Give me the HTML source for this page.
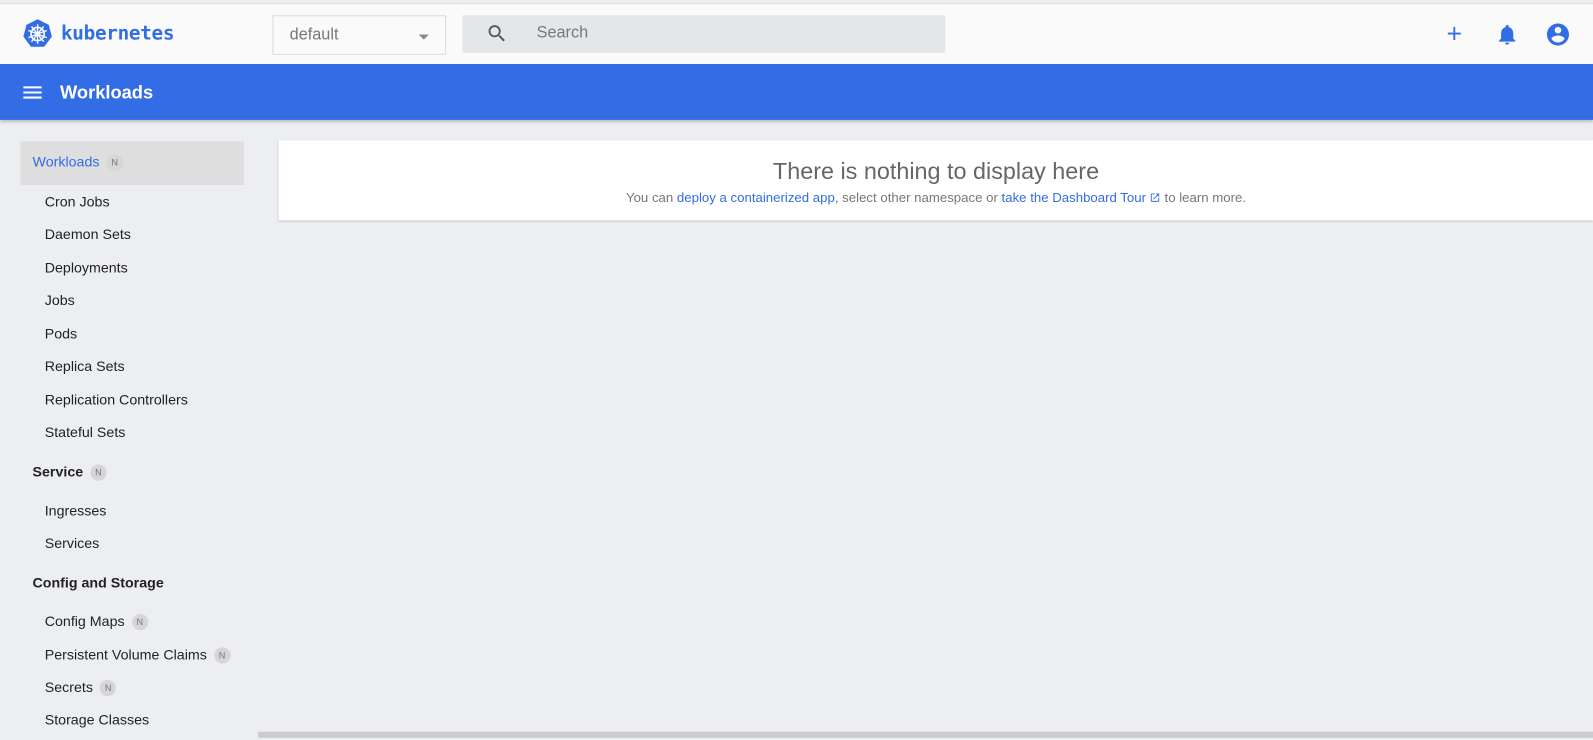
<!DOCTYPE html>
<html><head><meta charset="utf-8"><style>
*{margin:0;padding:0;box-sizing:border-box}
body{width:1593px;height:739px;overflow:hidden;background:#eceef1;font-family:"Liberation Sans",Roboto,sans-serif;position:relative}
#w{position:absolute;left:0;top:0;width:1568px;height:728px;transform:scale(1.0163);transform-origin:0 0}
.top{position:absolute;left:0;top:3px;width:1568px;height:60px;background:#fafafa;border-top:1px solid #ddd}
.logo{position:absolute;left:22px;top:14px}
.logotxt{position:absolute;left:60px;top:18px;font-family:"DejaVu Sans Mono","Liberation Mono",monospace;font-weight:bold;font-size:19px;color:#326de6;letter-spacing:-0.3px}
.ns{position:absolute;left:268px;top:11px;width:171px;height:39px;border:1px solid #dcdcdc;background:#fafafa;color:#777;font-size:16px;padding:10px 16px}
.ns:after{content:"";position:absolute;right:16px;top:18px;border:5px solid transparent;border-top-color:#888}
.search{position:absolute;left:455px;top:11px;width:475px;height:37px;background:#e4e7e9;color:#777;font-size:16px}
.search span{position:absolute;left:73px;top:9px}
.bar{position:absolute;left:0;top:63px;width:1568px;height:55px;background:#326de6;box-shadow:0 2px 3px rgba(0,0,0,.2)}
.bar b{position:absolute;left:59px;top:18px;color:#fff;font-size:18px}
.item{position:absolute;font-size:14px;color:#222;white-space:nowrap}
.hd{font-weight:bold}
.n{display:inline-block;width:16px;height:16px;border-radius:50%;background:#d6d6d6;color:#777;font-size:9px;text-align:center;line-height:16px;margin-left:7px;vertical-align:1px;font-weight:normal}
.card{position:absolute;left:274px;top:138px;width:1294px;height:79px;background:#fff;box-shadow:0 1px 2px rgba(0,0,0,.3);text-align:center}
.card h1{font-weight:normal;font-size:23px;color:#666;margin-top:17px}
.card p{font-size:13px;color:#777;margin-top:5px}
.card a{color:#326de6;text-decoration:none}
.scroll{position:absolute;left:254px;top:720px;width:1314px;height:6px;background:#ccc}
</style></head><body><div id="w">
<div class="top">
<svg class="logo" width="30" height="30" viewBox="0 0 30 30"><polygon points="15,1 26,6.5 29,18 21.5,28 8.5,28 1,18 4,6.5" fill="#326de6"/><circle cx="15" cy="15.5" r="6.5" fill="none" stroke="#fff" stroke-width="1.6"/><g stroke="#fff" stroke-width="1.4"><line x1="15" y1="6" x2="15" y2="25"/><line x1="6" y1="12" x2="24" y2="19"/><line x1="24" y1="12" x2="6" y2="19"/><line x1="9" y1="23" x2="21" y2="8"/><line x1="21" y1="23" x2="9" y2="8"/></g><circle cx="15" cy="15.5" r="2" fill="#fff"/></svg>
<div class="logotxt">kubernetes</div>
<div class="ns">default</div>
<div class="search"><svg style="position:absolute;left:23px;top:7px" width="22" height="22" viewBox="0 0 24 24"><path d="M15.5 14h-.79l-.28-.27A6.47 6.47 0 0016 9.5 6.5 6.5 0 109.5 16c1.61 0 3.09-.59 4.23-1.57l.27.28v.79l5 4.99L20.49 19l-4.99-5zm-6 0C7.01 14 5 11.990 5 9.5S7.01 5 9.5 5 14 7.01 14 9.5 11.99 14 9.5 14z" fill="#555"/></svg><span>Search</span></div>
<svg style="position:absolute;left:1420px;top:18px" width="22" height="22" viewBox="0 0 24 24"><path d="M19 13h-6v6h-2v-6H5v-2h6V5h2v6h6v2z" fill="#326de6"/></svg>
<svg style="position:absolute;left:1471px;top:18px" width="24" height="24" viewBox="0 0 24 24"><path d="M12 22c1.1 0 2-.9 2-2h-4c0 1.1.9 2 2 2zm6-6v-5c0-3.07-1.64-5.64-4.5-6.32V4c0-.83-.67-1.5-1.5-1.5s-1.5.67-1.5 1.5v.68C7.630 5.36 6 7.92 6 11v5l-2 2v1h16v-1l-2-2z" fill="#326de6"/></svg>
<svg style="position:absolute;left:1520px;top:17px" width="26" height="26" viewBox="0 0 24 24"><path d="M12 2C6.48 2 2 6.48 2 12s4.48 10 10 10 10-4.48 10-10S17.52 2 12 2zm0 3c1.66 0 3 1.34 3 3s-1.34 3-3 3-3-1.34-3-3 1.34-3 3-3zm0 14.2a7.2 7.2 0 01-6-3.22c.03-1.99 4-3.08 6-3.08 1.99 0 5.97 1.09 6 3.08a7.2 7.2 0 01-6 3.22z" fill="#326de6"/></svg>
</div>
<div class="bar"><svg style="position:absolute;left:20px;top:16px" width="24" height="24" viewBox="0 0 24 24"><path d="M3 18h18v-2H3v2zm0-5h18v-2H3v2zm0-7v2h18V6H3z" fill="#fff"/></svg><b>Workloads</b></div>
<div style="position:absolute;left:20px;top:139px;width:220px;height:43px;background:#dedede"></div>
<div class="item" style="left:32px;top:151px;color:#326de6">Workloads<span class="n">N</span></div>
<div class="item" style="left:44px;top:190px">Cron Jobs</div>
<div class="item" style="left:44px;top:222px">Daemon Sets</div>
<div class="item" style="left:44px;top:255px">Deployments</div>
<div class="item" style="left:44px;top:287px">Jobs</div>
<div class="item" style="left:44px;top:320px">Pods</div>
<div class="item" style="left:44px;top:352px">Replica Sets</div>
<div class="item" style="left:44px;top:385px">Replication Controllers</div>
<div class="item" style="left:44px;top:417px">Stateful Sets</div>
<div class="item hd" style="left:32px;top:456px">Service<span class="n">N</span></div>
<div class="item" style="left:44px;top:494px">Ingresses</div>
<div class="item" style="left:44px;top:526px">Services</div>
<div class="item hd" style="left:32px;top:565px">Config and Storage</div>
<div class="item" style="left:44px;top:603px">Config Maps<span class="n">N</span></div>
<div class="item" style="left:44px;top:636px">Persistent Volume Claims<span class="n">N</span></div>
<div class="item" style="left:44px;top:668px">Secrets<span class="n">N</span></div>
<div class="item" style="left:44px;top:700px">Storage Classes</div>
<div class="card"><h1>There is nothing to display here</h1><p>You can <a>deploy a containerized app</a>, select other namespace or <a>take the Dashboard Tour <svg width="11" height="11" viewBox="0 0 24 24" style="vertical-align:-1px"><path d="M19 19H5V5h7V3H5a2 2 0 00-2 2v14a2 2 0 002 2h14c1.1 0 2-.9 2-2v-7h-2v7zM14 3v2h3.59l-9.83 9.83 1.41 1.41L19 6.41V10h2V3h-7z" fill="#326de6"/></svg></a> to learn more.</p></div>
<div class="scroll"></div>
</div></body></html>
